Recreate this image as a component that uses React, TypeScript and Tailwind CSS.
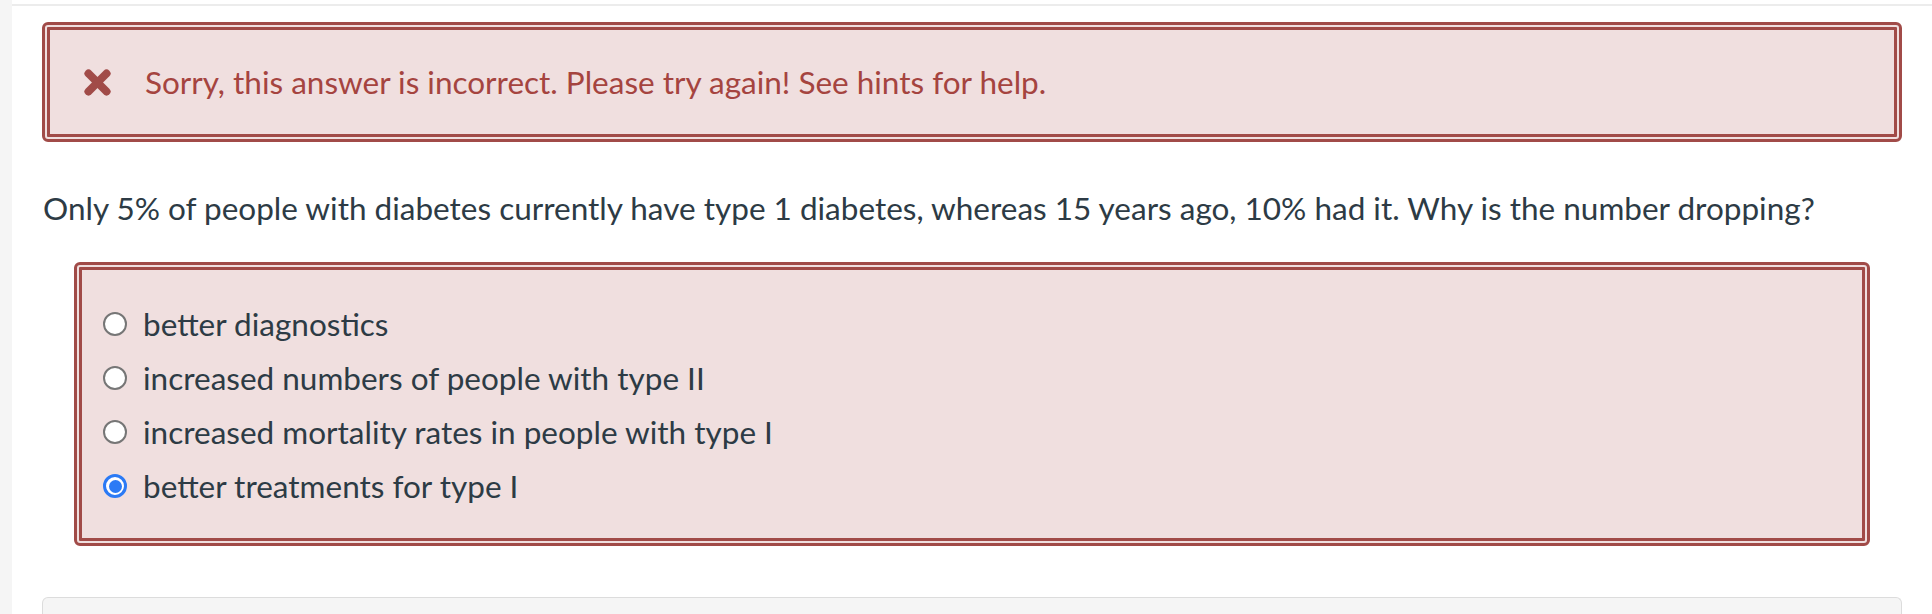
import React from "react";

const options = [
  { label: "better diagnostics", checked: false },
  { label: "increased numbers of people with type II", checked: false },
  { label: "increased mortality rates in people with type I", checked: false },
  { label: "better treatments for type I", checked: true },
];

function Radio({ checked }: { checked: boolean }) {
  if (checked) {
    return (
      <span className="flex h-[24px] w-[24px] shrink-0 items-center justify-center rounded-full border-[3px] border-[#2b7af5] bg-white">
        <span className="h-[13px] w-[13px] rounded-full bg-[#2b7af5]" />
      </span>
    );
  }
  return (
    <span className="h-[24px] w-[24px] shrink-0 rounded-full border-2 border-[#767676] bg-white" />
  );
}

export default function App() {
  return (
    <div
      className="flex min-h-[614px] w-full bg-white text-[#2d3b45]"
      style={{ fontFamily: "Lato, 'Noto Sans', sans-serif" }}
    >
      <div className="w-[12px] shrink-0 bg-[#f5f5f5]" />
      <div className="flex-1 min-w-0">
        <div className="mt-[4px] h-[2px] bg-[#ececec]" />
        <div className="px-[30px] pt-[16px]">
          <div className="flex items-center gap-[33px] rounded-[6px] border-[8px] border-double border-[#a14b48] bg-[#f0dfdf] py-[29px] pl-[33px] text-[31.5px] leading-[46px] text-[#a5443f]">
            <svg width="29" height="29" viewBox="0 0 29 29" className="shrink-0">
              <g stroke="#a14b48" strokeWidth="8" strokeLinecap="round">
                <line x1="5.5" y1="5.5" x2="23.5" y2="23.5" />
                <line x1="23.5" y1="5.5" x2="5.5" y2="23.5" />
              </g>
            </svg>
            <span>Sorry, this answer is incorrect. Please try again! See hints for help.</span>
          </div>

          <p className="mt-[43px] pl-[1px] text-[31.5px] leading-[46px]">
            Only 5% of people with diabetes currently have type 1 diabetes, whereas 15 years ago, 10% had it. Why is the number dropping?
          </p>

          <div className="mx-[32px] mt-[31px] rounded-[6px] border-[8px] border-double border-[#a14b48] bg-[#f0dfdf] pb-[25px] pl-[21px] pt-[27px]">
            {options.map((o) => (
              <label key={o.label} className="flex h-[54px] items-center gap-[16px] text-[31.5px] leading-[46px]">
                <Radio checked={o.checked} />
                <span>{o.label}</span>
              </label>
            ))}
          </div>

          <div className="mt-[51px] h-[40px] rounded-t-[6px] border border-b-0 border-[#dcdcdc] bg-[#f5f5f5]" />
        </div>
      </div>
    </div>
  );
}
